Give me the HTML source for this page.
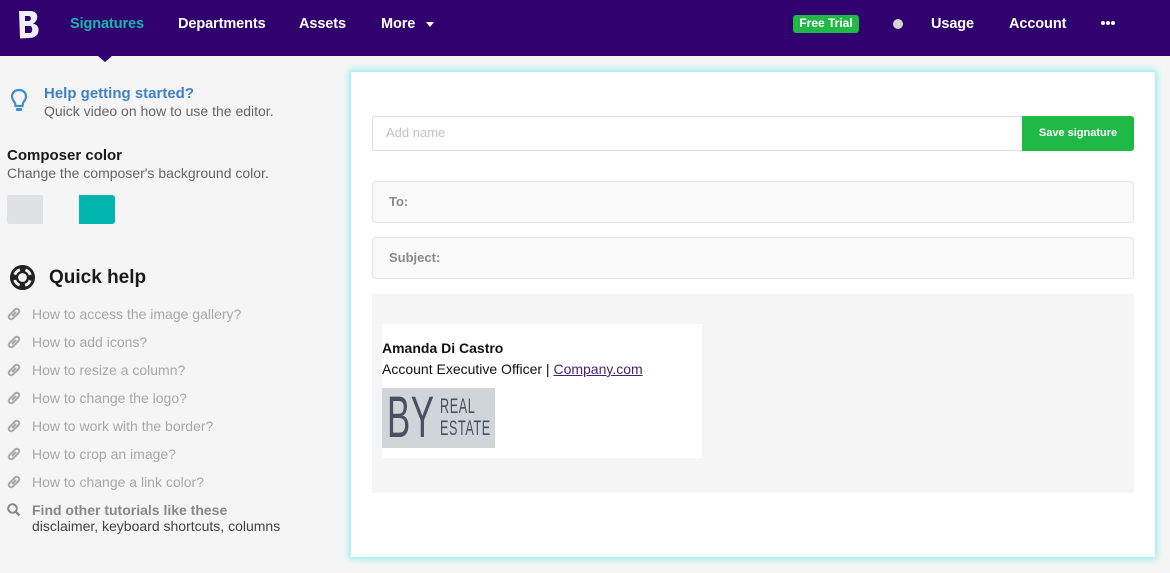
<!DOCTYPE html>
<html><head><meta charset="utf-8"><style>
*{box-sizing:border-box;margin:0;padding:0}
body{width:1170px;height:573px;overflow:hidden;background:#f5f5f5;font-family:"Liberation Sans",Arial,sans-serif;position:relative}
.nav{position:absolute;left:0;top:0;width:1170px;height:56px;background:#2f006e}
.nav .it{position:absolute;top:16px;font-size:14.5px;font-weight:bold;color:#fff;letter-spacing:-0.1px}
.logo{position:absolute;left:18px;top:10px;width:22px;height:29px}
.caret{position:absolute;left:98px;top:56px;width:0;height:0;border-left:7px solid transparent;border-right:7px solid transparent;border-top:6px solid #2f006e}
.ft{position:absolute;left:793px;top:15px;width:66px;height:18px;background:#21b946;border-radius:3px;color:#fff;font-size:12px;font-weight:bold;text-align:center;line-height:17px}
.dot{position:absolute;left:893px;top:19px;width:10px;height:10px;border-radius:50%;background:#d5d5d5}
.abs{position:absolute}
.link{position:absolute;left:32px;font-size:14px;color:#a8a8a8}
.li{position:absolute;left:6px;width:16px;height:16px}
.card{position:absolute;left:351px;top:72px;width:804px;height:485px;background:#fff;box-shadow:0 0 6px 2px #8ff0f0}
.inp{position:absolute;border:1px solid #ddd;border-radius:3px}
.fld{position:absolute;left:21px;width:762px;height:42px;background:#f9f9f9;border:1px solid #e6e6e6;border-radius:4px;font-size:13px;font-weight:bold;color:#8a8a8a;padding-left:16px;line-height:40px}
</style></head><body>
<div class="nav">
<svg class="logo" viewBox="0 0 22 29"><path d="M1 1 H12 C19 1 20 6 19 9 C18 12 16 13 15 13.5 C19 14.5 21 17 20.5 21 C20 26 16 28 11 28 L2 28.5 Z M7 6 V11 H11 C13.5 11 13.5 6 11 6 Z M7 16 V23 H12 C15 23 15 16 12 16 Z" fill="#f0eefa" fill-rule="evenodd"/></svg>
<div class="it" style="left:70px;color:#1bb5b0">Signatures</div>
<div class="it" style="left:178px">Departments</div>
<div class="it" style="left:299px">Assets</div>
<div class="it" style="left:381px">More</div>
<div class="abs" style="left:426px;top:22px;border-left:4px solid transparent;border-right:4px solid transparent;border-top:5px solid #fff"></div>
<div class="ft">Free Trial</div>
<div class="dot"></div>
<div class="it" style="left:931px">Usage</div>
<div class="it" style="left:1009px">Account</div>
<div class="abs" style="left:1101px;top:21px;width:14px;height:4px">
<span class="abs" style="left:0;top:0;width:4px;height:4px;border-radius:50%;background:#fff"></span>
<span class="abs" style="left:5px;top:0;width:4px;height:4px;border-radius:50%;background:#fff"></span>
<span class="abs" style="left:10px;top:0;width:4px;height:4px;border-radius:50%;background:#fff"></span></div>
</div>
<div class="caret"></div>

<svg class="abs" style="left:10px;top:88px" width="18" height="26" viewBox="0 0 18 26"><path d="M9 2 C4.5 2 2 5 2 8.5 C2 11.5 4 13 5 15 L5.5 18 H12.5 L13 15 C14 13 16 11.5 16 8.5 C16 5 13.5 2 9 2 Z" fill="none" stroke="#3e8bd0" stroke-width="2.2"/><rect x="6" y="20" width="6" height="3" rx="1" fill="#3e8bd0"/></svg>
<div class="abs" style="left:44px;top:85px;font-size:15px;font-weight:bold;color:#4082c8">Help getting started?</div>
<div class="abs" style="left:44px;top:103px;font-size:14px;color:#666">Quick video on how to use the editor.</div>

<div class="abs" style="left:7px;top:147px;font-size:15px;font-weight:bold;color:#1a1a1a">Composer color</div>
<div class="abs" style="left:7px;top:165px;font-size:14px;color:#666">Change the composer's background color.</div>
<div class="abs" style="left:7px;top:195px;width:36px;height:29px;background:#e0e1e3;border-radius:3px 0 0 3px"></div>
<div class="abs" style="left:79px;top:195px;width:36px;height:29px;background:#00b5ad;border-radius:0 3px 3px 0"></div>

<svg class="abs" style="left:9px;top:264px" width="27" height="27" viewBox="0 0 28 28"><circle cx="14" cy="14" r="13" fill="#222"/><circle cx="14" cy="14" r="8.5" fill="none" stroke="#f5f5f5" stroke-width="3" stroke-dasharray="7.5 5.8" stroke-dashoffset="-3"/><circle cx="14" cy="14" r="4.5" fill="#f5f5f5"/></svg>
<div class="abs" style="left:49px;top:267px;font-size:19px;font-weight:bold;color:#1a1a1a">Quick help</div>

<svg width="0" height="0" style="position:absolute"><defs><g id="ln"><path d="M6.5 9.5 L9.5 6.5 M6 6.5 L3.5 9 A2.4 2.4 0 0 0 7 12.5 L9.5 10 M10 9.5 L12.5 7 A2.4 2.4 0 0 0 9 3.5 L6.5 6" fill="none" stroke="#aaa" stroke-width="2" stroke-linecap="round"/></g></defs></svg>
<svg class="li" style="top:306px" viewBox="0 0 16 16"><use href="#ln"/></svg><div class="link" style="top:306px">How to access the image gallery?</div>
<svg class="li" style="top:334px" viewBox="0 0 16 16"><use href="#ln"/></svg><div class="link" style="top:334px">How to add icons?</div>
<svg class="li" style="top:362px" viewBox="0 0 16 16"><use href="#ln"/></svg><div class="link" style="top:362px">How to resize a column?</div>
<svg class="li" style="top:390px" viewBox="0 0 16 16"><use href="#ln"/></svg><div class="link" style="top:390px">How to change the logo?</div>
<svg class="li" style="top:418px" viewBox="0 0 16 16"><use href="#ln"/></svg><div class="link" style="top:418px">How to work with the border?</div>
<svg class="li" style="top:446px" viewBox="0 0 16 16"><use href="#ln"/></svg><div class="link" style="top:446px">How to crop an image?</div>
<svg class="li" style="top:474px" viewBox="0 0 16 16"><use href="#ln"/></svg><div class="link" style="top:474px">How to change a link color?</div>
<svg class="li" style="top:502px" viewBox="0 0 16 16"><circle cx="6.5" cy="6.5" r="4.3" fill="none" stroke="#888" stroke-width="2"/><path d="M9.5 9.5 L13.5 13.5" stroke="#888" stroke-width="2.4"/></svg>
<div class="abs" style="left:32px;top:502px;font-size:14px;font-weight:bold;color:#888">Find other tutorials like these</div>
<div class="abs" style="left:32px;top:518px;font-size:14px;color:#444">disclaimer, keyboard shortcuts, columns</div>

<div class="card">
<div class="inp" style="left:21px;top:44px;width:652px;height:35px;border-right:none;border-radius:3px 0 0 3px;font-size:13px;color:#c2c2c2;padding:8px 13px">Add name</div>
<div class="abs" style="left:671px;top:44px;width:112px;height:35px;background:#21b946;border-radius:0 3px 3px 0;color:#fff;font-size:11px;font-weight:bold;text-align:center;line-height:35px">Save signature</div>
<div class="fld" style="top:109px">To:</div>
<div class="fld" style="top:165px">Subject:</div>
<div class="abs" style="left:21px;top:222px;width:762px;height:199px;background:#f5f5f5">
<div class="abs" style="left:10px;top:30px;width:320px;height:134px;background:#fff">
<div class="abs" style="left:0;top:16px;font-size:14px;font-weight:bold;color:#111">Amanda Di Castro</div>
<div class="abs" style="left:0;top:37px;font-size:14px;color:#111">Account Executive Officer | <span style="color:#4b1f6f;text-decoration:underline">Company.com</span></div>
<div class="abs" style="left:0;top:64px;width:113px;height:60px;background:#cfd5d9">
<div class="abs" style="left:5px;top:2px;font-size:58px;line-height:56px;color:#4a5060;transform:scaleX(.6);transform-origin:left;letter-spacing:1px">BY</div>
<div class="abs" style="left:58px;top:8px;font-size:21px;line-height:22px;color:#4a5060;transform:scaleX(.6);transform-origin:left;letter-spacing:1px">REAL<br>ESTATE</div>
</div>
</div>
</div>
</div>
</body></html>
